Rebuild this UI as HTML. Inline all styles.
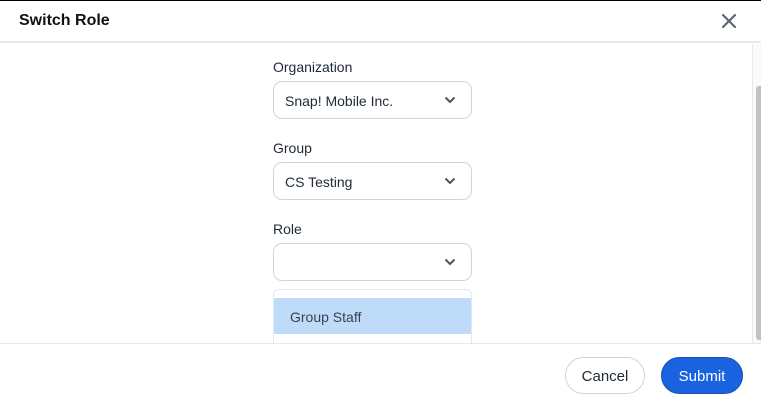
<!DOCTYPE html>
<html><head><style>
*{box-sizing:border-box;margin:0;padding:0}
body{width:761px;height:404px;overflow:hidden;background:#fff;font-family:"Liberation Sans",Arial,sans-serif;position:relative;color:#1f2937}
.top{position:absolute;left:0;top:0;width:761px;height:1px;background:#000}
.hdr{position:absolute;left:0;top:1px;width:761px;height:42px;border-bottom:2px solid #e5e7eb}
.hdr h1{position:absolute;left:19px;top:11px;font-size:16px;font-weight:bold;color:#111}
.x{position:absolute;left:720px;top:11px}
.sb{position:absolute;left:752px;top:44px;width:9px;height:299px;border-left:1px solid #e5e7eb;background:#fafafa}
.thumb{position:absolute;left:756px;top:86px;width:5px;height:254px;background:#c1c1c1;border-radius:3px 0 0 3px}
.lbl{position:absolute;left:273px;font-size:14px;color:#1f2937}
.sel{position:absolute;left:273px;width:199px;height:38px;border:1px solid #cbd5e1;border-radius:9px;font-size:14px;padding:11px 0 0 11px;color:#1f2937}
.sel svg{position:absolute;right:15px;top:14px}
.dd{position:absolute;left:273px;top:289px;width:199px;height:60px;border:1px solid #e2e8f0;border-radius:6px;background:#fff;overflow:hidden}
.opt{position:absolute;left:0;top:8px;width:199px;height:36px;background:#bfdbfa;font-size:14px;padding:11px 0 0 16px;color:#374151}
.ftr{position:absolute;left:0;top:343px;width:761px;height:61px;border-top:1px solid #e5e7eb;background:#fff}
.btn{position:absolute;top:357px;height:37px;border-radius:19px;font-size:15px;text-align:center;padding-top:10px}
.cancel{left:565px;width:80px;border:1px solid #cbd5e1;color:#1f2937;background:#fff}
.submit{left:661px;width:82px;background:#1a63e0;color:#fff;border:1px solid #1a4fb0}
</style></head><body>
<div class="top"></div>
<div class="hdr"><h1>Switch Role</h1>
<svg class="x" width="18" height="18" viewBox="0 0 18 18"><path d="M3 3L15 15M15 3L3 15" stroke="#5b6577" stroke-width="2.2" stroke-linecap="round"/></svg></div>
<div class="sb"></div><div class="thumb"></div>
<div class="lbl" style="top:59px">Organization</div>
<div class="sel" style="top:81px">Snap! Mobile Inc.<svg width="12" height="8" viewBox="0 0 12 8"><path d="M1.5 1.5L6 6L10.5 1.5" fill="none" stroke="#4b5568" stroke-width="2"/></svg></div>
<div class="lbl" style="top:140px">Group</div>
<div class="sel" style="top:162px">CS Testing<svg width="12" height="8" viewBox="0 0 12 8"><path d="M1.5 1.5L6 6L10.5 1.5" fill="none" stroke="#4b5568" stroke-width="2"/></svg></div>
<div class="lbl" style="top:221px">Role</div>
<div class="sel" style="top:243px"><svg width="12" height="8" viewBox="0 0 12 8"><path d="M1.5 1.5L6 6L10.5 1.5" fill="none" stroke="#4b5568" stroke-width="2"/></svg></div>
<div class="dd"><div class="opt">Group Staff</div></div>
<div class="ftr"></div>
<div class="btn cancel">Cancel</div>
<div class="btn submit">Submit</div>
</body></html>
